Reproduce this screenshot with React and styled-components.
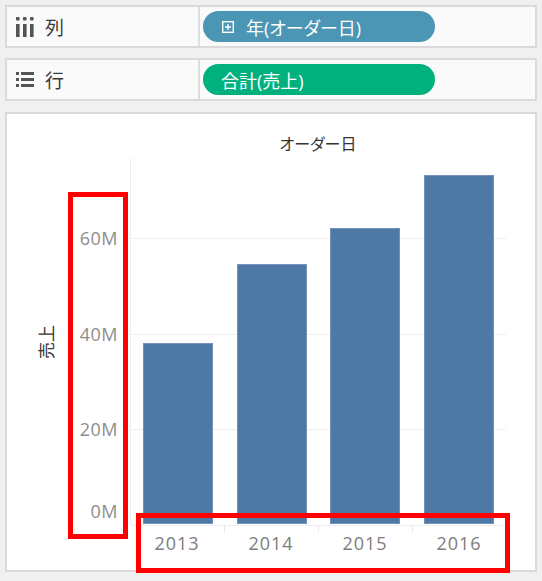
import styled, { createGlobalStyle } from "styled-components";

const GlobalStyle = createGlobalStyle`
  html, body {
    margin: 0;
    padding: 0;
    background: #f0f0f0;
    font-family: "Open Sans", "Noto Sans CJK JP", sans-serif;
  }
`;

const PX_PER_M = 95.67 / 20;
const PLOT_H = 367;

const sales = [
  { year: "2013", value: 37.8 },
  { year: "2014", value: 54.4 },
  { year: "2015", value: 61.9 },
  { year: "2016", value: 73.0 },
];

const ticks = [0, 20, 40, 60];

// the bottom label is lifted so it stays inside the pane, as Tableau does
const tickTop = (t) => (t === 0 ? PLOT_H - 14 : PLOT_H - t * PX_PER_M);

const ColumnsIcon = () => (
  <svg width="18" height="20" viewBox="0 0 18 20">
    {[0, 7, 14].map((x) => (
      <g key={x} fill="#555">
        <rect x={x} y="0" width="3.6" height="3.6" rx="0.8" />
        <rect x={x} y="7" width="3.6" height="13" />
      </g>
    ))}
  </svg>
);

const RowsIcon = () => (
  <svg width="18" height="16" viewBox="0 0 18 16">
    {[1, 7, 13].map((y) => (
      <g key={y} fill="#555">
        <rect x="0" y={y - 1} width="3" height="3" />
        <rect x="5" y={y - 1} width="13" height="3" />
      </g>
    ))}
  </svg>
);

const DateIcon = () => (
  <svg width="12" height="12" viewBox="0 0 12 12">
    <rect x="0.7" y="0.7" width="10.6" height="10.6" fill="none" stroke="#fff" strokeWidth="1.4" />
    <path d="M6 3v6M3 6h6" stroke="#fff" strokeWidth="1.4" />
  </svg>
);

const App = () => {
  return (
    <Page>
      <GlobalStyle />
      <Shelf>
        <ShelfLabel>
          <ColumnsIcon />
          <span>列</span>
        </ShelfLabel>
        <ShelfBody>
          <Pill $color="#4a96b4" $pad={19}>
            <DateIcon />
            <span>年(オーダー日)</span>
          </Pill>
        </ShelfBody>
      </Shelf>
      <Shelf>
        <ShelfLabel>
          <RowsIcon />
          <span>行</span>
        </ShelfLabel>
        <ShelfBody>
          <Pill $color="#00b17d" $pad={18}>
            <span>合計(売上)</span>
          </Pill>
        </ShelfBody>
      </Shelf>

      <ChartPanel>
        <ChartTitle>オーダー日</ChartTitle>
        <AxisTitle>
          <span>売上</span>
        </AxisTitle>
        <TickColumn>
          {ticks.map((t) => (
            <TickLabel key={t} style={{ top: tickTop(t) }}>
              {t}M
            </TickLabel>
          ))}
        </TickColumn>
        <Plot>
          {ticks.map((t) => (
            <GridLine key={t} style={{ top: PLOT_H - t * PX_PER_M }} />
          ))}
          {sales.map((d) => (
            <Band key={d.year}>
              <Bar style={{ height: d.value * PX_PER_M }} />
            </Band>
          ))}
        </Plot>
        <XAxis>
          {sales.map((d) => (
            <XLabel key={d.year}>{d.year}</XLabel>
          ))}
        </XAxis>

        <Highlight style={{ left: 61, top: 78, width: 60, height: 347 }} />
        <Highlight style={{ left: 129, top: 399, width: 374, height: 60 }} />
      </ChartPanel>
    </Page>
  );
};

const Page = styled.div`
  display: flex;
  flex-direction: column;
  gap: 10px;
  padding: 5px;
  width: 532px;
`;

const Shelf = styled.div`
  display: flex;
  height: 43px;
  box-sizing: border-box;
  border: 2px solid #dadada;
  background: #fafafa;
`;

const ShelfLabel = styled.div`
  display: flex;
  align-items: center;
  gap: 11px;
  width: 193px;
  padding-left: 9px;
  box-sizing: border-box;
  border-right: 2px solid #dedede;
  font-family: "Noto Sans CJK JP", sans-serif;
  font-size: 19px;
  color: #3a3a3a;
`;

const ShelfBody = styled.div`
  display: flex;
  align-items: center;
  padding-left: 3px;
`;

const Pill = styled.div`
  display: flex;
  align-items: center;
  gap: 12px;
  width: 232px;
  height: 31px;
  box-sizing: border-box;
  padding-left: ${(p) => p.$pad}px;
  border-radius: 16px;
  background: ${(p) => p.$color};
  color: #fff;
  font-family: "Open Sans", "Noto Sans CJK JP", sans-serif;
  font-size: 18px;
  font-feature-settings: "palt";
  white-space: nowrap;
`;

const ChartPanel = styled.div`
  position: relative;
  margin-top: 1px;
  height: 460px;
  box-sizing: border-box;
  border: 2px solid #dadada;
  background: #fff;
  display: grid;
  grid-template-columns: 74px 49px 376px 1fr;
  grid-template-rows: 44px ${PLOT_H}px 1fr;
`;

const ChartTitle = styled.div`
  grid-column: 3;
  grid-row: 1;
  display: flex;
  align-items: flex-end;
  justify-content: center;
  padding-bottom: 5px;
  font-family: "Noto Sans CJK JP", sans-serif;
  font-size: 16px;
  line-height: 20px;
  font-feature-settings: "palt";
  color: #333;
`;

const AxisTitle = styled.div`
  grid-column: 1;
  grid-row: 2;
  display: flex;
  align-items: center;
  justify-content: center;
  padding-left: 2px;

  span {
    writing-mode: vertical-rl;
    text-orientation: sideways;
    transform: rotate(180deg);
    font-family: "Noto Sans CJK JP", sans-serif;
    font-size: 17px;
    color: #333;
  }
`;

const TickColumn = styled.div`
  grid-column: 2;
  grid-row: 2;
  position: relative;
`;

const TickLabel = styled.div`
  position: absolute;
  right: 12px;
  transform: translateY(-50%);
  font-size: 18px;
  line-height: 22px;
  color: #8d8d8d;
  letter-spacing: 0.5px;
`;

const Plot = styled.div`
  grid-column: 3;
  grid-row: 2;
  position: relative;
  display: flex;
  align-items: flex-end;
  border-left: 1px solid #ededed;
`;

const GridLine = styled.div`
  position: absolute;
  left: 0;
  right: 0;
  height: 1px;
  background: #eeeeee;
`;

const Band = styled.div`
  position: relative;
  flex: 1;
  display: flex;
  justify-content: center;
`;

const Bar = styled.div`
  width: 70px;
  margin-bottom: 1px;
  background: #4e79a7;
  box-shadow: inset 0 0 0 1px #7391b9;
`;

const XAxis = styled.div`
  grid-column: 3;
  grid-row: 3;
  display: flex;
`;

const XLabel = styled.div`
  position: relative;
  flex: 1;
  text-align: center;
  padding-top: 6px;
  font-size: 18px;
  line-height: 24px;
  color: #7d7d7d;
  letter-spacing: 1px;

  & + &::before {
    content: "";
    position: absolute;
    left: 0;
    top: 0;
    width: 1px;
    height: 7px;
    background: #e6e6e6;
  }
`;

const Highlight = styled.div`
  position: absolute;
  box-sizing: border-box;
  border: 5px solid #ff0000;
  pointer-events: none;
`;

export default App;
